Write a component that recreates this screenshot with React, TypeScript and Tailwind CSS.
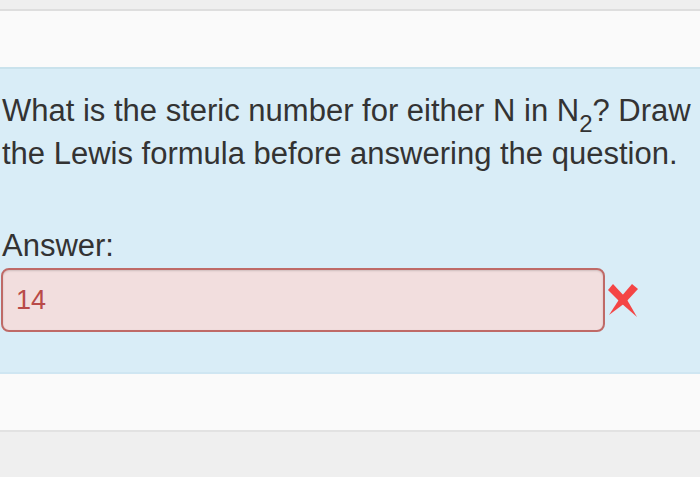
export default function App() {
  return (
    <div
      className="w-[700px] h-[477px] bg-[#efefef] overflow-hidden text-[#333]"
      style={{ fontFamily: '"Liberation Sans", Arial, sans-serif' }}
    >
      <div className="h-[9px]" />
      <div className="h-[60px] bg-[#fafafa] border-t-2 border-[#dedede] border-b-2 border-b-[#c9e2ec]" />
      <div className="bg-[#d9edf7] h-[303px] pt-[20px] pl-[2px]">
        <p className="text-[31px] leading-[43px]">
          What is the steric number for either N in N
          <span className="relative top-[11px] text-[24px] leading-none">2</span>? Draw
          <br />
          the Lewis formula before answering the question.
        </p>
        <div className="mt-[55px] text-[31px] leading-[32px]">Answer:</div>
        <div className="mt-[6px] flex items-center">
          <div className="w-[604px] h-[64px] -ml-[1px] rounded-[8px] border-2 border-[#bf6a67] bg-[#f2dede] shadow-[inset_0_1px_2px_rgba(0,0,0,0.15)] flex items-center pl-[13px]">
            <span className="text-[27px] text-[#b94a48]">14</span>
          </div>
          <svg width="30" height="34" viewBox="0 0 30 34" className="ml-[3px] -mt-[1px]">
            <path d="M0 7 L5 1 L18 15 L29 34 L13 20 Z" fill="#f44545" />
            <path d="M24 1 L30 6 L17 20 L1 32 L12 15 Z" fill="#f44545" />
          </svg>
        </div>
      </div>
      <div className="h-[60px] bg-[#fafafa] border-t-2 border-[#cfe6f2] border-b-2 border-b-[#e2e2e2]" />
    </div>
  );
}
